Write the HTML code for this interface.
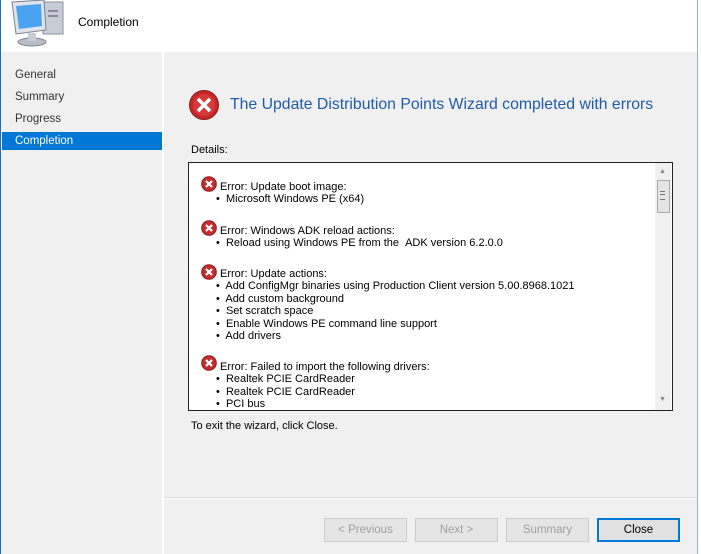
<!DOCTYPE html>
<html><head><style>
body{margin:0;width:701px;height:554px;position:relative;overflow:hidden;background:#f0f0f0;font-family:"Liberation Sans",Arial,sans-serif;font-size:11px;color:#000}
.a{position:absolute}
.nav{left:15px;font-size:11.5px;color:#333}
.btn{top:518px;width:81px;height:22px;border:1px solid #ccc;background:#e5e5e5;color:#a0a0a0;text-align:center;line-height:22px;font-size:11.5px}
.err{left:201px;width:16px;height:16px}
.l{left:201px;white-space:nowrap;line-height:12.5px}
</style></head><body>
<div class="a" style="left:0;top:0;width:697px;height:52px;background:#fff"></div>
<div class="a" style="left:0;top:0;width:1px;height:554px;background:#1a6fc4"></div>
<div class="a" style="left:697px;top:0;width:1px;height:554px;background:#8ab4dc"></div>
<div class="a" style="left:698px;top:0;width:3px;height:554px;background:#fff"></div>
<svg class="a" style="left:8px;top:0" width="56" height="48" viewBox="0 0 56 48">
<rect x="35" y="2" width="20" height="32" fill="#c8ccd4" stroke="#8890a0"/>
<rect x="40" y="10" width="10" height="2" fill="#889"/><rect x="40" y="15" width="10" height="2" fill="#889"/>
<path d="M4 2 L36 0 L38 30 L8 34 Z" fill="#dfe3ea" stroke="#7a8290"/>
<path d="M8 6 L33 4 L34 26 L11 29 Z" fill="#4aa3f0"/>
<ellipse cx="24" cy="42" rx="14" ry="4" fill="#b8bcc4" stroke="#7a8290"/>
<rect x="20" y="33" width="8" height="8" fill="#c8ccd4"/>
</svg>
<div class="a" style="left:78px;top:15px;font-size:12px">Completion</div>
<div class="a" style="left:162px;top:52px;width:2px;height:502px;background:#fff"></div>
<div class="a nav" style="top:69px">General</div>
<div class="a nav" style="top:91px">Summary</div>
<div class="a nav" style="top:113px">Progress</div>
<div class="a" style="left:2px;top:132px;width:160px;height:18px;background:#0078d7"></div>
<div class="a nav" style="top:135px;color:#fff">Completion</div>
<svg class="a" style="left:188px;top:89px" width="32" height="32" viewBox="0 0 32 32"><circle cx="16" cy="16" r="14.5" fill="#c62828" stroke="#8a1a1a"/><circle cx="16" cy="16" r="11" fill="#d43a3a"/><path d="M10 10 L22 22 M22 10 L10 22" stroke="#fff" stroke-width="3.5"/></svg>
<div class="a" style="left:230px;top:96px;font-size:15.8px;color:#1e5ca8">The Update Distribution Points Wizard completed with errors</div>
<div class="a" style="left:191px;top:144px">Details:</div>
<div class="a" style="left:188px;top:162px;width:483px;height:247px;border:1px solid #222;background:#fff"></div>
<div class="a" style="left:655px;top:163px;width:16px;height:247px;background:#f0f0f0"></div>
<div class="a" style="left:657px;top:180px;width:11px;height:31px;border:1px solid #aaa;background:#e4e4e4"></div>
<div class="a" style="left:660px;top:191px;width:5px;height:7px;border-top:1px solid #777;border-bottom:1px solid #777"></div>
<div class="a" style="left:660px;top:194px;width:5px;height:1px;background:#777"></div>
<div class="a" style="left:659px;top:168px;font-size:7px;color:#888">▲</div>
<div class="a" style="left:659px;top:396px;font-size:7px;color:#888">▼</div>
<svg width="0" height="0" style="position:absolute"><defs><symbol id="e" viewBox="0 0 16 16"><circle cx="8" cy="8" r="7.3" fill="#c03030" stroke="#8a1a1a"/><path d="M5 5 L11 11 M11 5 L5 11" stroke="#fff" stroke-width="2.2"/></symbol></defs></svg>
<svg class="a err" style="top:176px"><use href="#e"/></svg>
<svg class="a err" style="top:220px"><use href="#e"/></svg>
<svg class="a err" style="top:264px"><use href="#e"/></svg>
<svg class="a err" style="top:355px"><use href="#e"/></svg>
<div class="a l" style="left:220px;top:181px">Error: Update boot image:</div>
<div class="a l" style="left:216px;top:193px">•&nbsp; Microsoft Windows PE (x64)</div>
<div class="a l" style="left:220px;top:225px">Error: Windows ADK reload actions:</div>
<div class="a l" style="left:216px;top:237px">•&nbsp; Reload using Windows PE from the &nbsp;ADK version 6.2.0.0</div>
<div class="a l" style="left:220px;top:268px">Error: Update actions:</div>
<div class="a l" style="left:216px;top:280px">•&nbsp; Add ConfigMgr binaries using Production Client version 5.00.8968.1021<br>•&nbsp; Add custom background<br>•&nbsp; Set scratch space<br>•&nbsp; Enable Windows PE command line support<br>•&nbsp; Add drivers</div>
<div class="a l" style="left:220px;top:361px">Error: Failed to import the following drivers:</div>
<div class="a l" style="left:216px;top:373px">•&nbsp; Realtek PCIE CardReader<br>•&nbsp; Realtek PCIE CardReader<br>•&nbsp; PCI bus</div>
<div class="a" style="left:191px;top:420px">To exit the wizard, click Close.</div>
<div class="a" style="left:164px;top:497px;width:533px;height:1px;background:#dcdcdc"></div>
<div class="a" style="left:164px;top:498px;width:533px;height:1px;background:#fff"></div>
<div class="a btn" style="left:324px">&lt; Previous</div>
<div class="a btn" style="left:415px">Next &gt;</div>
<div class="a btn" style="left:506px">Summary</div>
<div class="a btn" style="left:597px;width:79px;height:20px;line-height:20px;border:2px solid #0078d7;background:#e1e1e1;color:#000">Close</div>
</body></html>
